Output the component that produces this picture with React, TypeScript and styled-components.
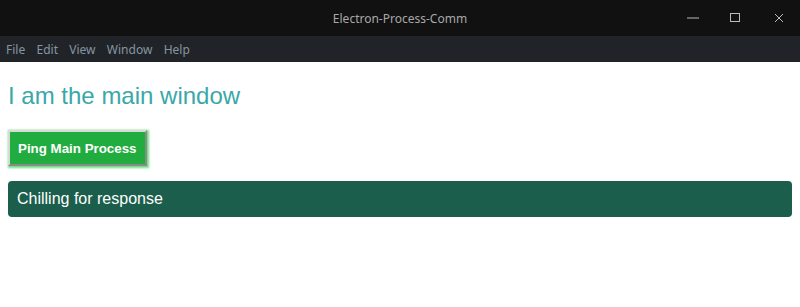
import React from "react";
import styled, { createGlobalStyle } from "styled-components";

const Global = createGlobalStyle`
  html, body { margin: 0; padding: 0; background: #ffffff; }
  body { font-family: "Liberation Sans", Arial, sans-serif; }
`;

const Frame = styled.div`
  width: 800px;
  height: 307px;
  display: flex;
  flex-direction: column;
  background: #ffffff;
  overflow: hidden;
`;

const TitleBar = styled.div`
  height: 36px;
  background: #111111;
  display: flex;
  align-items: center;
  position: relative;
  flex-shrink: 0;
`;

const Title = styled.div`
  flex: 1;
  text-align: center;
  color: #a8a8a8;
  font-family: "Noto Sans", "Open Sans", sans-serif;
  font-size: 12px;
`;

const Controls = styled.div`
  position: absolute;
  right: 0;
  top: 0;
  height: 36px;
  display: flex;
  align-items: center;
`;

const Ctrl = styled.div`
  width: 43px;
  height: 36px;
  display: flex;
  align-items: center;
  justify-content: center;
`;

const MenuBar = styled.div`
  height: 26px;
  background: #202428;
  display: flex;
  align-items: center;
  padding-left: 6px;
  gap: 11.3px;
  flex-shrink: 0;
`;

const MenuItem = styled.span`
  color: #8794a0;
  font-family: "Noto Sans", "Open Sans", sans-serif;
  font-size: 12px;
`;

const Content = styled.div`
  padding: 0 8px;
`;

const Heading = styled.h2`
  margin: 20px 0 20px;
  font-size: 24px;
  font-weight: normal;
  color: #3aa8a8;
`;

const PingButton = styled.button`
  display: block;
  height: 36px;
  padding: 0 8px;
  background: #21ac40;
  color: #ffffff;
  font-family: "Liberation Sans", Arial, sans-serif;
  font-weight: bold;
  font-size: 13.33px;
  border: 2px solid;
  border-color: #d9d9d9 #8a8a8a #8a8a8a #d9d9d9;
  box-shadow: 1px 1px 2px 1px #6fdc82;
`;

const Status = styled.div`
  margin-top: 15px;
  height: 36px;
  box-sizing: border-box;
  padding: 0 9px;
  display: flex;
  align-items: center;
  background: #1b5e4c;
  color: #ffffff;
  border-radius: 4px;
  font-size: 16px;
`;

export default function App() {
  return (
    <Frame>
      <Global />
      <TitleBar>
        <Title>Electron-Process-Comm</Title>
        <Controls>
          <Ctrl>
            <svg width="12" height="12" viewBox="0 0 12 12">
              <line x1="0" y1="6" x2="12" y2="6" stroke="#bbbbbb" strokeWidth="1" />
            </svg>
          </Ctrl>
          <Ctrl>
            <svg width="11" height="11" viewBox="0 0 11 11">
              <rect x="0.5" y="0.5" width="9" height="8" fill="none" stroke="#bbbbbb" strokeWidth="1" />
            </svg>
          </Ctrl>
          <Ctrl>
            <svg width="10" height="10" viewBox="0 0 10 10">
              <path d="M1 1 L9 9 M9 1 L1 9" stroke="#bbbbbb" strokeWidth="1" />
            </svg>
          </Ctrl>
        </Controls>
      </TitleBar>
      <MenuBar>
        <MenuItem>File</MenuItem>
        <MenuItem>Edit</MenuItem>
        <MenuItem>View</MenuItem>
        <MenuItem>Window</MenuItem>
        <MenuItem>Help</MenuItem>
      </MenuBar>
      <Content>
        <Heading>I am the main window</Heading>
        <PingButton>Ping Main Process</PingButton>
        <Status>Chilling for response</Status>
      </Content>
    </Frame>
  );
}
